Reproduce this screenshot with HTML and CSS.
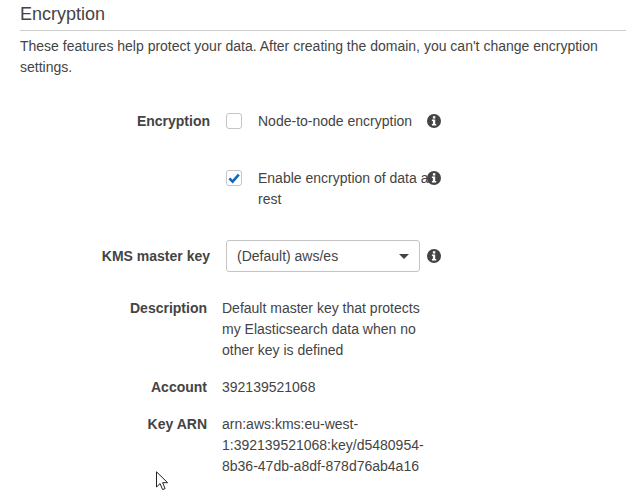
FILE: index.html
```html
<!doctype html>
<html lang="en">
<head>
  <meta charset="utf-8" />
  <title>Encryption</title>
  <link rel="stylesheet" href="styles.css">
</head>
<body>
  <section class="panel">
    <h2 class="title">Encryption</h2>
    <p class="intro">These features help protect your data. After creating the domain, you can't change encryption settings.</p>

    <div class="form-row row-first">
      <div class="label">Encryption</div>
      <span class="check"></span>
      <div class="check-text">Node-to-node encryption</div>
      <svg class="info" viewBox="0 0 14 14"><use href="#info"></use></svg>
    </div>

    <div class="form-row row-rest">
      <div class="label"></div>
      <span class="check">
        <svg viewBox="0 0 16 16"><path d="M3.4 8.4 6.6 11.6 12.8 4.6" fill="none" stroke="#1166bb" stroke-width="2.6"/></svg>
      </span>
      <div class="check-text">Enable encryption of data at rest</div>
      <svg class="info" viewBox="0 0 14 14"><use href="#info"></use></svg>
    </div>

    <div class="form-row row-kms">
      <div class="label">KMS master key</div>
      <div class="select">
        <span>(Default) aws/es</span>
        <span class="caret"></span>
      </div>
      <svg class="info" viewBox="0 0 14 14"><use href="#info"></use></svg>
    </div>

    <dl class="details">
      <dt>Description</dt>
      <dd>Default master key that protects my Elasticsearch data when no other key is defined</dd>
      <dt>Account</dt>
      <dd>392139521068</dd>
      <dt>Key ARN</dt>
      <dd>arn:aws:kms:eu-west-1:392139521068:key/d5480954-8b36-47db-a8df-878d76ab4a16</dd>
    </dl>
  </section>

  <svg class="cursor" viewBox="0 0 13 20" width="13" height="20">
    <path d="M.5.8V16l3.6-3.4 2.5 6 2.5-1-2.5-5.9h5z" fill="#fff" stroke="#222" stroke-width="1"/>
  </svg>

  <svg class="defs" width="0" height="0">
    <symbol id="info" viewBox="0 0 14 14">
      <circle cx="7" cy="7" r="7" fill="#444"/>
      <rect x="5.9" y="2.2" width="2.4" height="2.3" fill="#fff"/>
      <path d="M4.9 5.6H8.2V10.1H9.2V11.6H4.9V10.1H5.9V7.1H4.9z" fill="#fff"/>
    </symbol>
  </svg>
</body>
</html>
```

FILE: styles.css
```css
*{box-sizing:border-box}
html,body{height:100%}
body{
  margin:0;
  background:#fff;
  color:#444;
  font-family:"Liberation Sans",Arial,sans-serif;
  font-size:14px;
  line-height:21px;
  overflow:hidden;
}

.panel{padding:0 5px 0 20px}

.title{
  margin:0;
  height:31px;
  padding-top:2px;
  font-size:18px;
  line-height:24px;
  font-weight:400;
  border-bottom:1px solid #ccc;
}
.intro{margin:5px 0 0}

.form-row{
  display:grid;
  grid-template-columns:190px 16px 153px 14px;
  column-gap:16px;
  align-items:start;
}
.row-first{margin-top:33px}
.row-rest{margin-top:36px}
.row-kms{margin-top:30px;align-items:center;grid-template-columns:190px 194px 14px}

.label{
  text-align:right;
  font-weight:700;
}

.check{
  width:16px;
  height:16px;
  margin-top:2px;
  border:1px solid #c4c4c4;
  border-radius:3px;
  position:relative;
}
.check svg{position:absolute;left:-1px;top:-1px;width:16px;height:16px}

/* wider than its column: the text runs under the info icon */
.check-text{width:180px}

.info{width:14px;height:14px;margin-top:3px}
.row-kms .info{margin:0 0 0 -9px}

.select{
  height:32px;
  border:1px solid #c4c4c4;
  border-radius:3px;
  padding:0 10px;
  display:flex;
  align-items:center;
  justify-content:space-between;
}
.caret{
  width:0;
  height:0;
  border-left:5px solid transparent;
  border-right:5px solid transparent;
  border-top:5px solid #444;
}

.details{
  margin:26px 0 0;
  display:grid;
  grid-template-columns:187px 205px;
  column-gap:15px;
  row-gap:16px;
}
.details dt{font-weight:700;text-align:right}
.details dd{margin:0}

.cursor{position:absolute;left:156px;top:471px}
.defs{position:absolute}
```
